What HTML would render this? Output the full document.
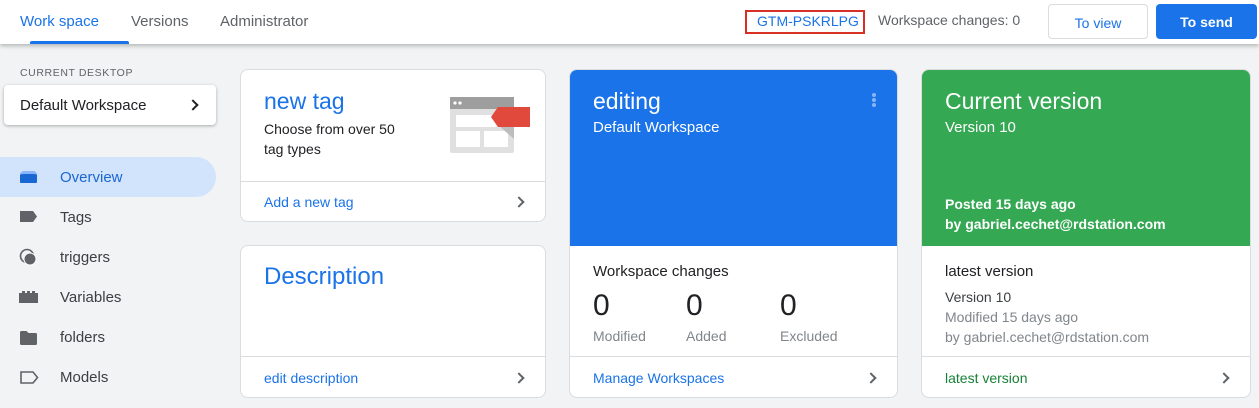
<!DOCTYPE html>
<html><head><style>
*{box-sizing:border-box;margin:0;padding:0}
body{width:1259px;height:408px;overflow:hidden;background:#f1f3f4;font-family:"Liberation Sans",Arial,sans-serif;position:relative;color:#202124}
.a{position:absolute;white-space:nowrap}
.hdr{position:absolute;left:0;top:0;width:1259px;height:44px;background:#fff;box-shadow:0 2px 4px rgba(0,0,0,.25);z-index:2}
.card{position:absolute;background:#fff;border:1px solid #dadce0;border-radius:8px;overflow:hidden}
.blue{color:#1a73e8}
.chev{position:absolute;width:8px;height:8px;border-right:2px solid #5f6368;border-top:2px solid #5f6368;transform:rotate(45deg)}
.nav{position:absolute;left:60px;font-size:15px;color:#3c4043}
.div{position:absolute;left:0;right:0;height:1px;background:#dadce0}
</style></head><body>
<div class="hdr">
<div class="a blue" style="left:20px;top:13px;font-size:15px">Work space</div>
<div style="position:absolute;left:30px;top:41px;width:99px;height:3px;background:#1a73e8;border-radius:2px 2px 0 0"></div>
<div class="a" style="left:131px;top:13px;font-size:15px;color:#5f6368">Versions</div>
<div class="a" style="left:220px;top:13px;font-size:15px;color:#5f6368">Administrator</div>
<div class="a" style="left:745px;top:10px;width:120px;height:24px;border:2px solid #d93025"></div>
<div class="a blue" style="left:757px;top:13px;font-size:14px">GTM-PSKRLPG</div>
<div class="a" style="left:878px;top:12px;font-size:14px;color:#5f6368">Workspace changes: 0</div>
<div class="a" style="left:1048px;top:4px;width:100px;height:35px;border:1px solid #dadce0;border-radius:4px;color:#1a73e8;font-size:14px;text-align:center;line-height:36px">To view</div>
<div class="a" style="left:1156px;top:4px;width:101px;height:35px;background:#1a73e8;border-radius:4px;color:#fff;font-size:14px;font-weight:bold;text-align:center;line-height:37px">To send</div>
</div>

<div class="a" style="left:20px;top:67px;font-size:10.5px;letter-spacing:.6px;color:#5f6368">CURRENT DESKTOP</div>
<div class="a" style="left:4px;top:85px;width:212px;height:40px;background:#fff;border-radius:4px;box-shadow:0 1px 3px rgba(0,0,0,.3)">
<div class="a" style="left:16px;top:12px;font-size:15px">Default Workspace</div>
<div class="chev" style="left:185px;top:16px;border-color:#202124"></div></div>

<div class="a" style="left:0;top:157px;width:216px;height:40px;background:#d2e3fc;border-radius:0 20px 20px 0"></div>
<div class="a" style="left:20px;top:171px;width:17px;height:12px;background:#1967d2;border-radius:4px 4px 1px 1px;border-top:3px solid #8ab4f8"></div>
<div class="nav" style="top:169px;color:#1967d2">Overview</div>
<svg class="a" style="left:19px;top:210px" width="19" height="13"><path d="M1 1h13l4 5.5-4 5.5H1z" fill="#5f6368"/></svg>
<div class="nav" style="top:209px">Tags</div>
<svg class="a" style="left:19px;top:248px" width="19" height="19"><circle cx="8" cy="8" r="6.5" fill="none" stroke="#5f6368" stroke-width="1.6"/><circle cx="11" cy="11" r="6" fill="#5f6368" stroke="#fff" stroke-width="1"/></svg>
<div class="nav" style="top:249px">triggers</div>
<svg class="a" style="left:19px;top:291px" width="19" height="12"><path d="M0 2h3V0h3v2h2V0h3v2h2V0h3v2h3v10H0z" fill="#5f6368"/></svg>
<div class="nav" style="top:289px">Variables</div>
<svg class="a" style="left:20px;top:331px" width="17" height="14"><path d="M0 1.5Q0 0 1.5 0h5l2 2h7Q17 2 17 3.5v9Q17 14 15.5 14h-14Q0 14 0 12.5z" fill="#5f6368"/></svg>
<div class="nav" style="top:329px">folders</div>
<svg class="a" style="left:20px;top:371px" width="19" height="13"><path d="M1 1h12l4.5 5.5-4.5 5.5H1z" fill="none" stroke="#5f6368" stroke-width="1.6"/></svg>
<div class="nav" style="top:369px">Models</div>

<div class="card" style="left:240px;top:69px;width:306px;height:153px">
<div class="a blue" style="left:23px;top:18px;font-size:23px">new tag</div>
<div class="a" style="left:23px;top:49px;font-size:14px;line-height:20px">Choose from over 50<br>tag types</div>
<svg class="a" style="left:209px;top:27px" width="82" height="58"><rect x="0" y="0" width="64" height="56" rx="2" fill="#e0e0e0"/><rect x="0" y="0" width="64" height="12" fill="#9e9e9e"/><circle cx="5" cy="6" r="1.6" fill="#fff"/><circle cx="10" cy="6" r="1.6" fill="#fff"/><rect x="6" y="18" width="52" height="12" fill="#fff"/><rect x="6" y="34" width="24" height="16" fill="#fff"/><rect x="34" y="34" width="24" height="16" fill="#fff"/><path d="M48 28l16 14V24z" fill="#bdbdbd"/><path d="M41 20l7-10h32v20H48z" fill="#e2493d"/></svg>
<div class="div" style="top:111px"></div>
<div class="a blue" style="left:23px;top:124px;font-size:14px">Add a new tag</div>
<div class="chev" style="left:274px;top:128px"></div>
</div>

<div class="card" style="left:240px;top:245px;width:306px;height:153px">
<div class="a blue" style="left:23px;top:17px;font-size:24px">Description</div>
<div class="div" style="top:110px"></div>
<div class="a blue" style="left:23px;top:124px;font-size:14px">edit description</div>
<div class="chev" style="left:274px;top:128px"></div>
</div>

<div class="card" style="left:569px;top:69px;width:329px;height:329px;border-color:#dadce0">
<div class="a" style="left:0;top:0;width:329px;height:176px;background:#1a73e8"></div>
<div class="a" style="left:23px;top:18px;font-size:23px;color:#fff">editing</div>
<div class="a" style="left:23px;top:49px;font-size:15px;color:#fff">Default Workspace</div>
<div class="a" style="left:302px;top:23px;width:4px;height:4px;border-radius:2px;background:#8ab4f8;box-shadow:0 5px 0 #8ab4f8,0 10px 0 #8ab4f8"></div>
<div class="a" style="left:23px;top:193px;font-size:15px">Workspace changes</div>
<div class="a" style="left:23px;top:219px;font-size:30px">0</div>
<div class="a" style="left:116px;top:219px;font-size:30px">0</div>
<div class="a" style="left:210px;top:219px;font-size:30px">0</div>
<div class="a" style="left:23px;top:258px;font-size:14px;color:#80868b">Modified</div>
<div class="a" style="left:116px;top:258px;font-size:14px;color:#80868b">Added</div>
<div class="a" style="left:210px;top:258px;font-size:14px;color:#80868b">Excluded</div>
<div class="div" style="top:286px"></div>
<div class="a blue" style="left:23px;top:300px;font-size:14px">Manage Workspaces</div>
<div class="chev" style="left:297px;top:304px"></div>
</div>

<div class="card" style="left:921px;top:69px;width:330px;height:329px;border-color:#dadce0">
<div class="a" style="left:0;top:0;width:330px;height:176px;background:#34a853"></div>
<div class="a" style="left:23px;top:18px;font-size:23px;color:#fff">Current version</div>
<div class="a" style="left:23px;top:49px;font-size:15px;color:#fff">Version 10</div>
<div class="a" style="left:23px;top:124px;font-size:14px;color:#fff;font-weight:bold;line-height:20px">Posted 15 days ago<br>by gabriel.cechet@rdstation.com</div>
<div class="a" style="left:23px;top:193px;font-size:15px">latest version</div>
<div class="a" style="left:23px;top:217px;font-size:14px;line-height:20px;color:#3c4043">Version 10<br><span style="color:#80868b">Modified 15 days ago<br>by gabriel.cechet@rdstation.com</span></div>
<div class="div" style="top:286px"></div>
<div class="a" style="left:23px;top:300px;font-size:14px;color:#188038">latest version</div>
<div class="chev" style="left:298px;top:304px"></div>
</div>
</body></html>
